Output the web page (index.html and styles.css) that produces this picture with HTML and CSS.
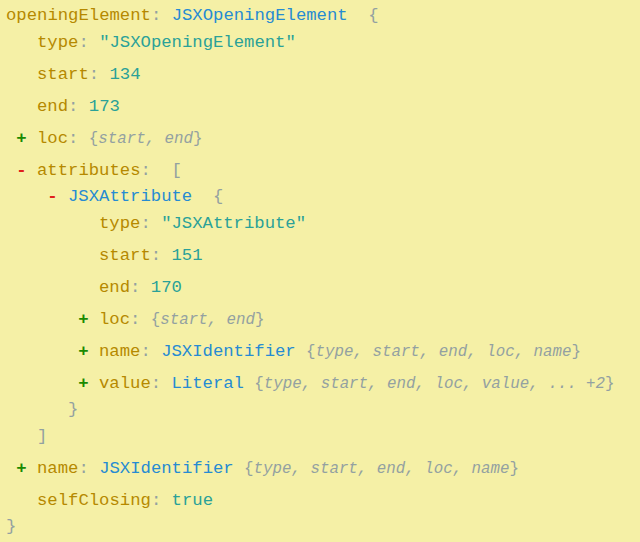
FILE: index.html
```html
<!DOCTYPE html>
<html>
<head>
<meta charset="utf-8">
<link rel="stylesheet" href="styles.css">
</head>
<body>
<ul class="tree root">
  <li class="entry">
    <div class="line"><span class="key">openingElement</span><span class="p">: </span><span class="tname">JSXOpeningElement</span>  <span class="p">{</span></div>
    <ul class="tree">
      <li class="entry"><div class="line"><span class="key">type</span><span class="p">: </span><span class="val">"JSXOpeningElement"</span></div></li>
      <li class="entry"><div class="line"><span class="key">start</span><span class="p">: </span><span class="val">134</span></div></li>
      <li class="entry"><div class="line"><span class="key">end</span><span class="p">: </span><span class="val">173</span></div></li>
      <li class="entry"><div class="line"><span class="tg plus">+</span><span class="key">loc</span><span class="p">: </span><span class="sum"><span class="br">{</span><i>start, end</i><span class="br">}</span></span></div></li>
      <li class="entry">
        <div class="line"><span class="tg minus">-</span><span class="key">attributes</span><span class="p">:  [</span></div>
        <ul class="tree">
          <li class="entry">
            <div class="line"><span class="tg minus">-</span><span class="tname">JSXAttribute</span>  <span class="p">{</span></div>
            <ul class="tree">
              <li class="entry"><div class="line"><span class="key">type</span><span class="p">: </span><span class="val">"JSXAttribute"</span></div></li>
              <li class="entry"><div class="line"><span class="key">start</span><span class="p">: </span><span class="val">151</span></div></li>
              <li class="entry"><div class="line"><span class="key">end</span><span class="p">: </span><span class="val">170</span></div></li>
              <li class="entry"><div class="line"><span class="tg plus">+</span><span class="key">loc</span><span class="p">: </span><span class="sum"><span class="br">{</span><i>start, end</i><span class="br">}</span></span></div></li>
              <li class="entry"><div class="line"><span class="tg plus">+</span><span class="key">name</span><span class="p">: </span><span class="tname">JSXIdentifier</span> <span class="sum"><span class="br">{</span><i>type, start, end, loc, name</i><span class="br">}</span></span></div></li>
              <li class="entry"><div class="line"><span class="tg plus">+</span><span class="key">value</span><span class="p">: </span><span class="tname">Literal</span> <span class="sum"><span class="br">{</span><i>type, start, end, loc, value, ... +2</i><span class="br">}</span></span></div></li>
            </ul>
            <div class="line"><span class="p">}</span></div>
          </li>
        </ul>
        <div class="line"><span class="p">]</span></div>
      </li>
      <li class="entry"><div class="line"><span class="tg plus">+</span><span class="key">name</span><span class="p">: </span><span class="tname">JSXIdentifier</span> <span class="sum"><span class="br">{</span><i>type, start, end, loc, name</i><span class="br">}</span></span></div></li>
      <li class="entry"><div class="line"><span class="key">selfClosing</span><span class="p">: </span><span class="val">true</span></div></li>
    </ul>
    <div class="line"><span class="p">}</span></div>
  </li>
</ul>
</body>
</html>
```
FILE: styles.css
```css
html, body {
  margin: 0;
  padding: 0;
  background: #f5f0a6;
}
body {
  font-family: "Liberation Mono", "Courier New", monospace;
  font-size: 17.25px;
  line-height: 21px;
  color: #93a1a1;
  padding-left: 6px;
}
.tree {
  list-style: none;
  margin: 0;
  padding: 0 0 0 31px;
}
.tree.root {
  padding-left: 0;
}
.entry {
  display: block;
  padding: 5.5px 0;
}
.root > .entry {
  padding-top: 5px;
}
.line {
  white-space: pre;
  height: 21px;
}
.key {
  color: #b58900;
}
.p {
  color: #93a1a1;
}
.tname {
  color: #268bd2;
}
.val {
  color: #2aa198;
}
.sum {
  font-size: 15.8px;
  color: #93a1a1;
}
.sum i {
  font-style: italic;
}
.tg {
  display: inline-block;
  width: 20.7px;
  margin-left: -20.7px;
  font-weight: bold;
}
.plus {
  color: #1a8a00;
}
.minus {
  color: #e0201b;
}
```
